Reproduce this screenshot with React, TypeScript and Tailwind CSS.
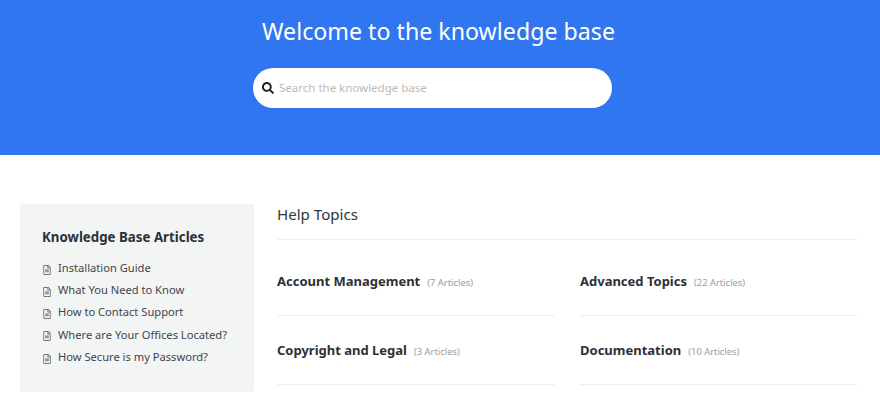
import { FaSearch, FaRegFileAlt } from 'react-icons/fa';

const articles = [
  'Installation Guide',
  'What You Need to Know',
  'How to Contact Support',
  'Where are Your Offices Located?',
  'How Secure is my Password?',
];

const topics = [
  { name: 'Account Management', count: '(7 Articles)' },
  { name: 'Advanced Topics', count: '(22 Articles)' },
  { name: 'Copyright and Legal', count: '(3 Articles)' },
  { name: 'Documentation', count: '(10 Articles)' },
];

export default function App() {
  return (
    <div className="h-[411px] overflow-hidden bg-white font-['Noto_Sans',sans-serif]">
      {/* Hero */}
      <div className="flex h-[155px] flex-col items-center bg-[#3176f1] pt-[14px]">
        <h1 className="ml-[-3px] text-[23.2px] leading-[34px] text-white">Welcome to the knowledge base</h1>
        <div className="ml-[-15px] mt-[20px] flex h-[40px] w-[359px] items-center rounded-full bg-white pl-[9px]">
          <FaSearch className="h-[12px] w-[12px] text-[#222]" />
          <span className="ml-[5px] text-[11.5px] text-[#bdb9b3]">Search the knowledge base</span>
        </div>
      </div>

      <div className="flex items-start pl-[20px] pt-[49px]">
        {/* Sidebar */}
        <aside className="h-[188px] w-[234px] rounded-[2px] bg-[#f3f5f5] pl-[23px] pt-[23px]">
          <h3 className="ml-[-1px] text-[13.3px] font-bold leading-[20px] text-[#2c3038]">Knowledge Base Articles</h3>
          <ul className="mt-[10px]">
            {articles.map(a => (
              <li key={a} className="flex h-[22.25px] items-center text-[#3f444c]">
                <FaRegFileAlt className="mt-[3px] h-[10px] w-[8px] shrink-0 text-[#777]" />
                <span className="ml-[7px] text-[11.15px]">{a}</span>
              </li>
            ))}
          </ul>
        </aside>

        {/* Topics */}
        <main className="ml-[23px] w-[580px]">
          <h2 className="h-[36px] border-b border-[#eeeeee] text-[15.1px] leading-[20px] text-[#33373e]">Help Topics</h2>
          <div className="mt-[7px] grid grid-cols-[278px_277px] gap-x-[25px]">
            {topics.map(t => (
              <div key={t.name} className="flex h-[69px] items-center border-b border-[#eeeeee] pt-[2px]">
                <span className="text-[13px] font-bold text-[#2c3038]">{t.name}</span>
                <span className="ml-[7px] mt-[2px] text-[9.4px] text-[#9b9b9b]">{t.count}</span>
              </div>
            ))}
          </div>
        </main>
      </div>
    </div>
  );
}
